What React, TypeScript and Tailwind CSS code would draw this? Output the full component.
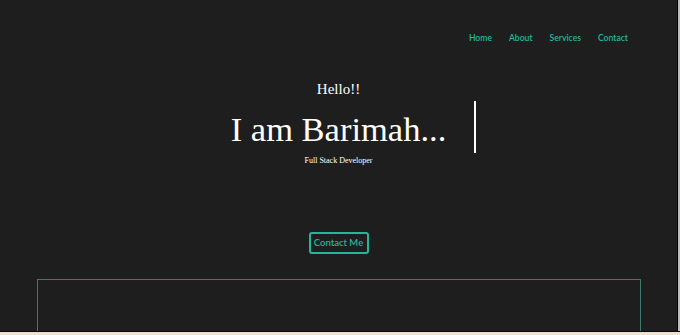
import React from "react";

export default function App() {
  return (
    <div className="w-[680px] h-[335px] overflow-hidden flex flex-col bg-[#e8e0d0]">
      <div className="flex flex-1 min-h-0">
        <div className="flex-1 min-w-0 bg-[#1e1e1e] flex flex-col overflow-hidden">
          <nav className="h-[77px] flex items-center justify-end pr-[49px] gap-[17px] text-[8.6px] font-semibold text-[#1fb89a] font-['Lato',sans-serif] shrink-0">
            <a>Home</a>
            <a>About</a>
            <a>Services</a>
            <a>Contact</a>
          </nav>
          <div className="flex flex-col items-center text-white font-['Liberation_Serif',serif]">
            <div className="text-[15px] leading-[18px] mt-[3px]">Hello!!</div>
            <div className="relative mt-[11px]">
              <div className="text-[34.5px] leading-[40px]">I am Barimah...</div>
              <span className="absolute right-[-30px] top-[-8px] w-[2px] h-[52px] bg-white" />
            </div>
            <div className="text-[8px] leading-[10px] mt-[7px]">Full Stack Developer</div>
          </div>
          <div className="flex justify-center mt-[66px]">
            <button className="w-[60px] h-[22px] border-2 border-[#1fb89a] rounded-[3px] text-[#1fb89a] text-[9.5px] font-semibold font-['Lato',sans-serif] flex items-center justify-center">
              Contact Me
            </button>
          </div>
          <div className="mt-[25px] mx-[37px] w-[604px] flex-1 border border-b-0 border-[#3a7d6d]" />
        </div>
        <div className="w-[1px] bg-black" />
        <div className="w-[2px] bg-[#bdbdbd]" />
      </div>
      <div className="h-[1px] bg-[#0a0a0a]" />
      <div className="h-[3px] bg-[#ece3d2]" />
    </div>
  );
}
